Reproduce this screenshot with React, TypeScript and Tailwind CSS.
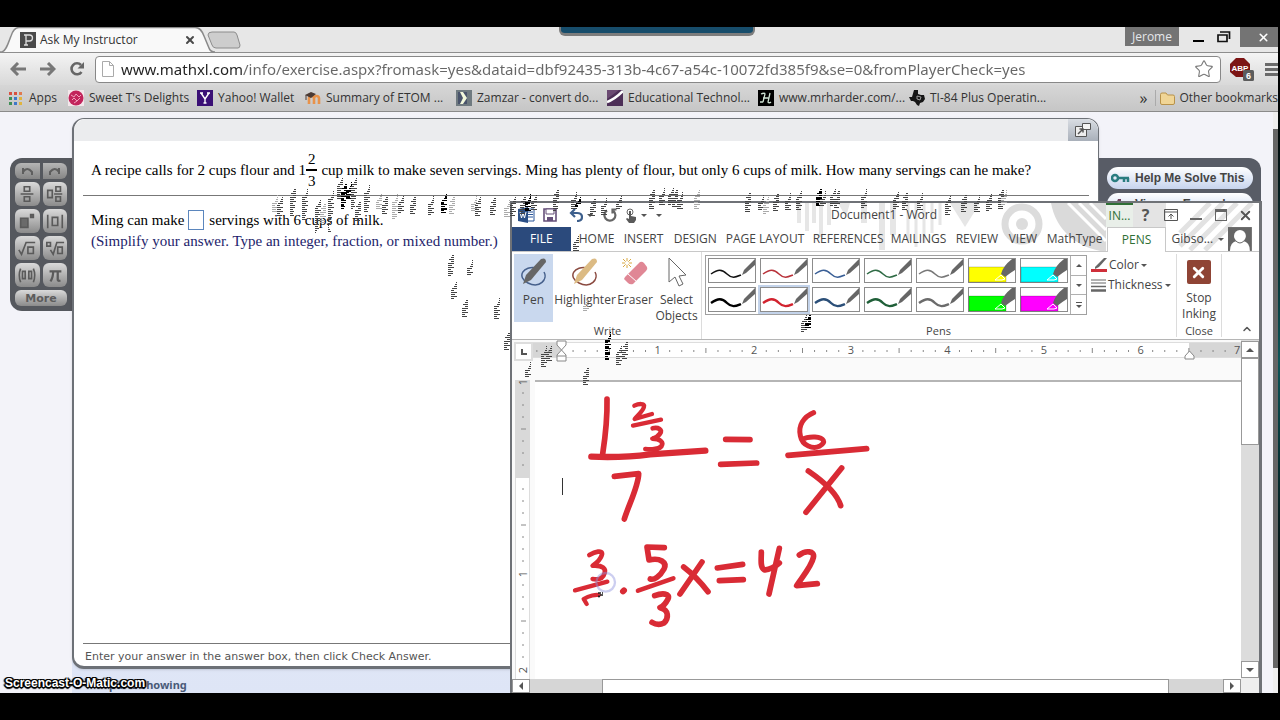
import type { ReactNode } from "react";
import { ChevronUp, Star, X } from "lucide-react";

const pageUrl =
  "www.mathxl.com/info/exercise.aspx?fromask=yes&dataid=dbf92435-313b-4c67-a54c-10072fd385f9&se=0&fromPlayerCheck=yes";

const bookmarks = [
  { label: "Apps", icon: "apps", width: "w-[60px]" },
  { label: "Sweet T's Delights", icon: "sweet", width: "w-[129px]" },
  { label: "Yahoo! Wallet", icon: "yahoo", width: "w-[108px]" },
  { label: "Summary of ETOM ...", icon: "moodle", width: "w-[151px]" },
  { label: "Zamzar - convert do...", icon: "zamzar", width: "w-[151px]" },
  { label: "Educational Technol...", icon: "edu", width: "w-[151px]" },
  { label: "www.mrharder.com/...", icon: "harder", width: "w-[151px]" },
  { label: "TI-84 Plus Operatin...", icon: "texas", width: "w-[151px]" },
];

const ribbonTabs = [
  { label: "HOME", width: "w-[45px]" },
  { label: "INSERT", width: "w-[50px]" },
  { label: "DESIGN", width: "w-[52px]" },
  { label: "PAGE LAYOUT", width: "w-[87px]" },
  { label: "REFERENCES", width: "w-[78px]" },
  { label: "MAILINGS", width: "w-[65px]" },
  { label: "REVIEW", width: "w-[53px]" },
  { label: "VIEW", width: "w-[38px]" },
  { label: "MathType", width: "w-[60px]" },
];

const pens = [
  { name: "Black pen", color: "#111", thick: 1.5 },
  { name: "Red pen", color: "#b8323a", thick: 1.5 },
  { name: "Blue pen", color: "#3a5f96", thick: 1.5 },
  { name: "Green pen", color: "#2f6b45", thick: 1.5 },
  { name: "Gray pen", color: "#777", thick: 1.5 },
  { name: "Yellow highlighter", color: "#ffff00", marker: true },
  { name: "Cyan highlighter", color: "#00ffff", marker: true },
  { name: "Thick black pen", color: "#000", thick: 2.4 },
  { name: "Thick red pen", color: "#d2232f", thick: 2.4, selected: true },
  { name: "Thick blue pen", color: "#2b4f78", thick: 2.4 },
  { name: "Thick green pen", color: "#1f5f38", thick: 2.4 },
  { name: "Thick gray pen", color: "#6b6b6b", thick: 2.4 },
  { name: "Green highlighter", color: "#00ff00", marker: true },
  { name: "Magenta highlighter", color: "#ff00ff", marker: true },
];

// x, y, height, weight (1 = faint, 2 = normal, 3 = dark)
const specks: number[][] = [
  [272, 195, 18, 1], [277, 197, 20, 2], [290, 189, 28, 2], [302, 189, 33, 2],
  [315, 200, 34, 2], [320, 204, 20, 1], [328, 191, 42, 2], [337, 178, 22, 2],
  [341, 184, 26, 3], [346, 182, 18, 3], [351, 178, 32, 2], [355, 202, 20, 2],
  [364, 185, 28, 2], [376, 194, 16, 1], [382, 197, 18, 2], [392, 194, 27, 1],
  [398, 196, 18, 2], [410, 197, 18, 2], [428, 196, 20, 2], [441, 194, 20, 3],
  [449, 197, 18, 1], [471, 196, 16, 1], [475, 197, 20, 2], [490, 198, 19, 2],
  [504, 200, 18, 1], [510, 197, 20, 2], [520, 197, 18, 2], [525, 194, 18, 3],
  [531, 195, 16, 2], [553, 190, 22, 2], [571, 192, 18, 2], [575, 197, 10, 3],
  [590, 199, 18, 2], [601, 198, 18, 2], [616, 196, 14, 2], [649, 190, 21, 2],
  [659, 188, 18, 2], [668, 188, 18, 2], [672, 190, 18, 2], [677, 192, 18, 2],
  [694, 190, 20, 1], [745, 193, 20, 2], [758, 195, 17, 2], [763, 197, 18, 1],
  [773, 194, 18, 2], [785, 193, 18, 2], [796, 191, 20, 2], [816, 189, 18, 3],
  [820, 191, 17, 2], [830, 189, 18, 2], [834, 191, 18, 2], [861, 189, 20, 2],
  [893, 192, 18, 2], [902, 193, 18, 2], [917, 193, 18, 2], [945, 196, 20, 2],
  [961, 195, 19, 2], [974, 195, 19, 2], [986, 194, 19, 2], [998, 190, 20, 2],
  [1001, 190, 16, 1], [573, 236, 17, 2], [448, 255, 22, 2], [467, 260, 16, 2],
  [451, 282, 18, 2], [462, 300, 18, 2], [494, 298, 22, 2], [583, 298, 14, 1],
  [504, 333, 18, 2], [605, 332, 28, 3], [616, 346, 20, 2], [622, 342, 18, 2],
  [541, 346, 22, 2], [546, 346, 16, 2], [583, 368, 19, 2], [525, 362, 17, 2],
  [801, 315, 19, 2], [805, 315, 14, 3],
];

const speckRows = [1, 1, 2, 3, 5, 3, 6, 4, 6, 3, 5, 5, 3, 4, 3, 4, 2];

function Specks() {
  return (
    <svg
      className="pointer-events-none absolute left-0 top-0 z-20"
      width="1278"
      height="581"
      viewBox="0 112 1278 581"
      shapeRendering="crispEdges"
      aria-hidden="true"
    >
      {specks.map(([x, y, h, weight], i) => (
        <g key={i} fill={weight === 1 ? "#aaa" : weight === 2 ? "#444" : "#000"}>
          {Array.from({ length: Math.floor(h / 2) }, (_, row) => {
            const w = speckRows[(row + (i % 3)) % speckRows.length];
            return (
              <rect
                key={row}
                x={row < 4 ? x + 6 - w : x}
                y={y + row * 2}
                width={w}
                height={weight === 3 && row % 3 === 1 ? 2 : 1}
              />
            );
          })}
        </g>
      ))}
    </svg>
  );
}

function BookmarkIcon({ name }: { name: string }) {
  const base = "h-4 w-4 shrink-0";
  switch (name) {
    case "apps":
      return (
        <svg className={base} viewBox="0 0 16 16">
          {["#d9503f", "#d9503f", "#e07a4f", "#3f8f55", "#3f78c8", "#e0b43f", "#3f8f55", "#3f78c8", "#e0b43f"].map(
            (c, i) => (
              <rect key={i} x={1 + (i % 3) * 5} y={2 + Math.floor(i / 3) * 5} width="3" height="3" fill={c} />
            ),
          )}
        </svg>
      );
    case "sweet":
      return (
        <svg className={base} viewBox="0 0 16 16">
          <rect width="16" height="16" fill="#f3e6ea" />
          <circle cx="8" cy="8" r="7.5" fill="#c2255c" />
          <path d="M3 5l3 2 2-3 3 3 2-2M4 10l2-2 3 3 3-3M6 13l3-2" stroke="#f2a0bd" fill="none" />
        </svg>
      );
    case "yahoo":
      return (
        <svg className={base} viewBox="0 0 16 16">
          <rect width="16" height="16" fill="#3b1076" />
          <path d="M4 3l4 6 4-6M8 9v4M3 3h3M10 3h3M6.500 13h3" stroke="#fff" strokeWidth="1.400" fill="none" />
        </svg>
      );
    case "moodle":
      return (
        <svg className={base} viewBox="0 0 16 16">
          <path d="M4 14V8.500a2.500 2.500 0 0 1 5 0V14M9 14V8.500a2.500 2.500 0 0 1 5 0V14" stroke="#e8924a" strokeWidth="2.600" fill="none" />
          <path d="M0 5l6-3 5 2-5 4z" fill="#4b3a34" />
          <path d="M1 5v5" stroke="#4b3a34" />
        </svg>
      );
    case "zamzar":
      return (
        <svg className={base} viewBox="0 0 16 16">
          <rect width="16" height="16" fill="#6f7a80" />
          <rect x="2" y="2" width="9" height="12" fill="#49536b" />
          <path d="M4 2h3l4 6-4 6H4l3-6z" fill="#f2f8dc" />
        </svg>
      );
    case "edu":
      return (
        <svg className={base} viewBox="0 0 16 16">
          <rect width="16" height="16" fill="#4d2f57" />
          <path d="M0 0h12L0 9z" fill="#6b4a72" />
          <path d="M0 12C6 10 11 6 16 1" stroke="#fff" strokeWidth="2.500" fill="none" />
        </svg>
      );
    case "harder":
      return (
        <svg className={base} viewBox="0 0 16 16">
          <rect width="16" height="16" fill="#000" />
          <path d="M3 4c2-1 4-1 4 0L5 12M12 3l-2 9c0 1 2 1 3 0M5 8h6M2 12h3" stroke="#cfe3d4" strokeWidth="1.300" fill="none" />
        </svg>
      );
    default:
      return (
        <svg className={base} viewBox="0 0 16 16">
          <path d="M5 0h4v4l3 1 3 0 1 4-2 3-3 1-1 3-2-1-2-3-2-1-2 0-2-4h3z" fill="#161616" />
          <path d="M8 6l4 1-1 3-3-1z" stroke="#b9b9b9" strokeWidth=".8" fill="none" />
        </svg>
      );
  }
}

function TabStrip() {
  return (
    <div className="relative flex h-[25px] items-center bg-[#e7e7e7] font-['Open_Sans',sans-serif]">
      <svg className="absolute left-0 top-0" width="250" height="26" viewBox="0 0 250 26" aria-hidden="true">
        <path d="M0 25 H2 C6 24 8 17 11 9 C13 3 15 .5 19 .5 H195 C200 .5 202 4 204 9 L209 21 C210 24 212 25 215 25" fill="#f9f9f9" stroke="#8a8a8a" strokeWidth="1.500" />
        <path d="M212 5 H234 Q236 5 237 8 L240 18 Q240 21 238 21 H216 Q213 21 212 18 L208 8 Q208 5 212 5Z" fill="#cdcdcd" stroke="#8c8c8c" />
      </svg>
      <button type="button" className="relative flex w-[180px] items-center pl-5 text-xs text-[#333]">
        <svg width="16" height="16" viewBox="0 0 16 16" aria-hidden="true">
          <rect width="16" height="16" fill="#4a4a4a" />
          <path d="M6 13V3h3.500a2.500 2.500 0 0 1 0 6H6M4 3h2M4 13h4" stroke="#ddd" strokeWidth="1.300" fill="none" />
        </svg>
        <span className="ml-1">Ask My Instructor</span>
      </button>
      <button type="button" aria-label="Close tab" className="relative ml-1">
        <X size={12} strokeWidth={4} color="#4a4a4a" />
      </button>
      <div className="flex flex-1 items-start justify-center self-start pr-[8px]">
        <div className="h-[9px] w-[196px] rounded-b-md border-x-2 border-b-[3px] border-[#7d7d7d] bg-[#174d6b]" />
      </div>
      <div className="flex self-start">
        <button type="button" className="h-[19px] w-[54px] bg-[#747474] text-xs leading-4 text-gray-200">
          Jerome
        </button>
        <button type="button" aria-label="Minimize" className="flex h-5 w-[38px] items-center justify-center pt-2">
          <span className="h-[2px] w-[11px] bg-black" />
        </button>
        <button type="button" aria-label="Restore" className="flex h-5 w-[23px] items-center">
          <svg width="14" height="12" viewBox="0 0 14 12">
            <path d="M3 1h9.500v7M1 4h9v6.500H1z" fill="none" stroke="#111" strokeWidth="1.700" />
          </svg>
        </button>
        <button type="button" aria-label="Close" className="flex h-[20px] w-[38px] items-center justify-center bg-[#747474] pl-2">
          <X size={13} strokeWidth={3} color="#fff" />
        </button>
      </div>
    </div>
  );
}

function Toolbar() {
  return (
    <div className="flex h-[33px] items-center border-t border-[#8e8e8e] bg-linear-to-b from-[#f4f4f4] to-[#d9d9d9] pl-[10px]">
      <button type="button" aria-label="Back" className="w-[29px]">
        <svg width="17" height="14" viewBox="0 0 17 14">
          <path d="M8 1L2 7l6 6M2 7h14" fill="none" stroke="#777" strokeWidth="3" />
        </svg>
      </button>
      <button type="button" aria-label="Forward" className="w-[30px]">
        <svg width="17" height="14" viewBox="0 0 17 14">
          <path d="M9 1l6 6-6 6M15 7H1" fill="none" stroke="#777" strokeWidth="3" />
        </svg>
      </button>
      <button type="button" aria-label="Reload" className="w-[26px]">
        <svg width="16" height="16" viewBox="0 0 16 16">
          <path d="M12.500 11A5.500 5.500 0 1 1 12 4" fill="none" stroke="#666" strokeWidth="2.600" />
          <path d="M15 1v6.500H8.500z" fill="#666" />
        </svg>
      </button>
      <div className="relative flex h-[27px] flex-1 items-center rounded-sm border border-[#888] bg-white px-[6px]">
        <svg width="12" height="16" viewBox="0 0 12 16" aria-hidden="true">
          <path d="M.5.5h7l4 4v11H.500zM7.500.5v4h4" fill="#fff" stroke="#aaa" />
        </svg>
        {/* the host part of the address is darker than the rest */}
        <input
          type="text"
          aria-label="Address"
          defaultValue={pageUrl}
          className="ml-[7px] min-w-0 flex-1 bg-[linear-gradient(to_right,#222_121px,#666_121px)] bg-clip-text font-['Noto_Sans',sans-serif] text-[15px] text-transparent outline-none"
        />
        <button type="button" aria-label="Bookmark this page">
          <Star size={20} strokeWidth={1.3} color="#777" />
        </button>
      </div>
      <button type="button" aria-label="Adblock Plus" className="relative ml-[9px] h-6 w-[25px]">
        <svg width="25" height="25" viewBox="0 0 25 25">
          <path d="M6 1h8l6 6v8l-6 5H6l-6-5V7z" fill="#7c1414" />
          <text x="1.500" y="14" fontSize="8" fontWeight="700" fill="#fff" fontFamily="Liberation Sans">ABP</text>
          <rect x="13" y="13" width="11" height="11" rx="1.500" fill="#5c5c5c" />
          <text x="16" y="22" fontSize="9" fontWeight="700" fill="#fff" fontFamily="Liberation Sans">6</text>
        </svg>
      </button>
      <button type="button" aria-label="Menu" className="ml-[10px] flex w-[13px] flex-col gap-[2px]">
        <span className="h-[3px] bg-[#6a6a6a]" />
        <span className="h-[3px] bg-[#6a6a6a]" />
        <span className="h-[3px] bg-[#6a6a6a]" />
      </button>
    </div>
  );
}

function BookmarksBar() {
  return (
    <nav className="flex h-[27px] items-center border-b border-[#8a8a8a] bg-linear-to-b from-[#d6d6d6] to-[#c6c6c6] pl-2 font-['Open_Sans',sans-serif] text-xs text-[#333]">
      {bookmarks.map((b) => (
        <a key={b.label} href="#" className={`flex shrink-0 items-center gap-[5px] whitespace-nowrap ${b.width}`}>
          <BookmarkIcon name={b.icon} />
          {b.label}
        </a>
      ))}
      <button type="button" className="ml-auto mr-[8px] text-base leading-none">»</button>
      <a href="#" className="flex items-center gap-1 whitespace-nowrap border-l border-[#aaa] pl-1">
        <svg width="15" height="13" viewBox="0 0 15 13" className="shrink-0" aria-hidden="true">
          <path d="M.5 2.500Q.5 1 2 1h4l1.500 2H13q1.500 0 1.500 1.500v6.500q0 1.500-1.500 1.500H2Q.5 12.500.5 11z" fill="#f0d596" stroke="#b8924a" />
        </svg>
        Other bookmarks
      </a>
    </nav>
  );
}

const paletteIcons: { name: string; art: ReactNode }[] = [
  { name: "Fraction", art: <path d="M9 3h6v5H9zM5 11h14M9 14h6v5H9z" /> },
  { name: "Mixed number", art: <path d="M4 7h5v8H4zM13 3h5v5h-5zM11 11h9M13 14h5v5h-5z" /> },
  { name: "Exponent", art: <path d="M5 8h8v10H5zM16 4h3v3h-3z" fill="#6a6a6a" /> },
  { name: "Absolute value", art: <path d="M4 4v15M20 4v15M9 7h6v9H9z" /> },
  { name: "Square root", art: <path d="M3 13l3 5 5-13h10M13 10h6v7h-6z" /> },
  { name: "Root", art: <path d="M7 13l3 5 4-13h8M15 10h5v7h-5zM3 5h4v4H3z" /> },
  { name: "Ordered pair", art: <path d="M5 4q-3 7 0 15M19 4q3 7 0 15M7 7h3v8H7zM14 7h3v8h-3z" /> },
  { name: "Pi", art: <path d="M6 7h13M10 7q0 7-3 11M15 7v9q0 2 3 1" strokeWidth="2.500" /> },
];

function Palette() {
  const key = "rounded-md bg-linear-to-b from-[#dadada] to-[#8b8b8b]";
  return (
    <aside className="ml-[10px] mt-[46px] w-[62px] shrink-0 self-start rounded-l-xl bg-[#55585e] p-[5px]">
      <div className="grid grid-cols-2 gap-x-[3px] gap-y-[3px]">
        <button type="button" aria-label="Undo" className="flex h-4 items-center justify-center rounded-l-md bg-linear-to-b from-[#b5b5b5] to-[#858585]">
          <svg width="14" height="12" viewBox="0 0 14 12"><path d="M3 9V3M3 7q4-6 9 0v3" fill="none" stroke="#5e5e5e" strokeWidth="2" /></svg>
        </button>
        <button type="button" aria-label="Redo" className="flex h-4 items-center justify-center rounded-r-md bg-linear-to-b from-[#b5b5b5] to-[#858585]">
          <svg width="14" height="12" viewBox="0 0 14 12"><path d="M11 9V3M11 7Q7 1 2 7v3" fill="none" stroke="#5e5e5e" strokeWidth="2" /></svg>
        </button>
        {paletteIcons.map((p) => (
          <button key={p.name} type="button" aria-label={p.name} className={`flex h-6 items-center justify-center ${key}`}>
            <svg width="22" height="20" viewBox="0 0 24 22" fill="none" stroke="#5a5a5a" strokeWidth="1.800">
              {p.art}
            </svg>
          </button>
        ))}
      </div>
      <button type="button" className={`mt-[3px] block h-4 w-full font-['DejaVu_Sans',sans-serif] text-[11px] font-bold leading-none text-[#5c5c5c] ${key}`}>
        More
      </button>
    </aside>
  );
}

function Exercise() {
  return (
    <section className="flex flex-1 flex-col bg-linear-to-b from-[#f3f3f9] to-[#dee5f6]">
      <div className="mt-[6px] flex flex-1 flex-col rounded-xl border border-b-[3px] border-l-2 border-[#6d7177] bg-white shadow-sm">
        <div className="flex h-[22px] justify-end overflow-hidden rounded-t-xl bg-[#ebecee]">
          <button type="button" aria-label="Open in new window" className="flex w-[30px] items-center justify-center bg-linear-to-b from-[#d9dde3] to-[#a9b0ba]">
            <svg width="18" height="16" viewBox="0 0 18 16" fill="none" stroke="#555">
              <path d="M1.500 4.500h11v10h-11z" fill="#eee" />
              <path d="M8.500 1.500h8v6h-8z" fill="#f4f4f4" />
              <path d="M4 12l5-5M5.500 7H9v3.500" strokeWidth="1.500" />
            </svg>
          </button>
        </div>
        <div className="ml-[9px] mr-[9px] flex flex-1 flex-col font-['Liberation_Serif',serif] text-[15px] text-black">
          <p className="flex h-[55px] items-center whitespace-nowrap border-b border-[#777] pl-[8px] pt-1">
            A recipe calls for 2 cups flour and 1
            <span className="mr-1 inline-flex flex-col items-center leading-[20px]">
              <span className="border-b-2 border-black px-[2px]">2</span>
              <span>3</span>
            </span>
            cup milk to make seven servings. Ming has plenty of flour, but only 6 cups of milk. How many servings can he make?
          </p>
          <p className="mt-[14px] flex h-5 items-center pl-[8px]">
            <label htmlFor="answer">Ming can make</label>
            <input id="answer" type="text" className="ml-1 mr-[5px] h-5 w-4 border border-[#5b86bd] bg-white outline-none" />
            servings with 6 cups of milk.
          </p>
          <p className="pl-[8px] text-[#1d1d6b]">(Simplify your answer. Type an integer, fraction, or mixed number.)</p>
          <p className="mt-auto h-[23px] border-t border-[#777] pl-[2px] pt-[5px] font-['DejaVu_Sans',sans-serif] text-[11px] text-[#555]">
            Enter your answer in the answer box, then click Check Answer.
          </p>
        </div>
      </div>
      <div className="h-6 pl-[37px] pt-2 font-['Noto_Sans',sans-serif] text-[11px] font-bold leading-4 text-[#4a5a78]">
        parts showing
      </div>
    </section>
  );
}

function HelpPanel() {
  const pill =
    "flex h-[22px] w-full items-center gap-[5px] whitespace-nowrap rounded-full bg-linear-to-b from-white to-[#c7d4ee] pl-1 text-xs font-bold text-[#444]";
  return (
    <aside className="mr-[12px] mt-[46px] h-[135px] w-[162px] shrink-0 rounded-tr-xl bg-[#585c66] px-2 pt-[9px] font-['Liberation_Sans',sans-serif]">
      <button type="button" className={pill}>
        <svg width="19" height="12" viewBox="0 0 19 12" className="shrink-0" fill="none" stroke="#2a7d80" aria-hidden="true">
          <circle cx="4" cy="6" r="3" strokeWidth="2.500" />
          <path d="M7 6h11M13 6v4M17 6v4" strokeWidth="2.500" />
        </svg>
        Help Me Solve This
      </button>
      <button type="button" className={`mt-1 ${pill}`}>
        <svg width="19" height="12" viewBox="0 0 19 12" className="shrink-0" aria-hidden="true">
          <path d="M7 1h3v3h4v7H5V6z" fill="#6d3f5a" />
        </svg>
        View an Example
      </button>
    </aside>
  );
}

function WordTitleArt() {
  return (
    <svg className="absolute right-0 top-0" width="470" height="49" viewBox="789 202 470 49" aria-hidden="true">
      <g stroke="#e6e6e6" strokeWidth="4">
        <path d="M799 202v20M807 202v28M814 202v20M821 202v34M829 202v22" />
        <path d="M864 202v20M882 202v47M893 202v32" strokeWidth="6" />
        <path d="M908 202v38M916 202v44M924 202v40M932 202v30M940 202v22" strokeWidth="3" />
      </g>
      <path d="M838 202h12l-4 14zM950 202h30l-15 24z" fill="#e6e6e6" />
      <circle cx="1022" cy="223" r="17" fill="none" stroke="#dcdcdc" strokeWidth="7" />
      <circle cx="1022" cy="223" r="6" fill="#dcdcdc" />
      <path d="M1051 202h55v49c-30-4-50-22-55-49z" fill="#dadada" />
      <path d="M1068 202l38 38M1079 202l27 27M1090 202l16 16" stroke="#fff" strokeWidth="3" />
      <path d="M1133 202h33v24h-33z" fill="#e4e4e4" />
      <path d="M1180 232l30-30M1180 245l43-43M1190 249l47-47M1205 249l47-47" stroke="#e2e2e2" strokeWidth="5" />
    </svg>
  );
}

function WordTitleBar() {
  return (
    <div className="relative flex h-6 items-center pl-[6px]">
      <svg width="17" height="16" viewBox="0 0 17 16" aria-hidden="true">
        <path d="M8 2h8v12H8z" fill="#fff" stroke="#2b579a" />
        <path d="M10 5h5M10 7.500h5M10 10h5" stroke="#2b579a" />
        <path d="M0 2l10-2v16L0 14z" fill="#2b4f86" />
        <path d="M2 5l1.500 6L5 6l1.500 5L8 5" fill="none" stroke="#fff" />
      </svg>
      <button type="button" aria-label="Save" className="ml-2">
        <svg width="14" height="14" viewBox="0 0 14 14">
          <path d="M1 1h12v12H1z" fill="#fff" stroke="#66507a" strokeWidth="1.600" />
          <path d="M3 1h8v5H3z" fill="#fff" stroke="#66507a" />
          <path d="M4 9h6v4H4z" fill="#66507a" />
        </svg>
      </button>
      <button type="button" aria-label="Undo" className="ml-3">
        <svg width="14" height="14" viewBox="0 0 14 14" fill="none" stroke="#3d5f8c" strokeWidth="2.200">
          <path d="M2 5h6q5 0 5 4t-5 4M6 1L2 5l4 4" />
        </svg>
      </button>
      <span className="ml-1 h-0 w-0 border-x-[3px] border-t-[3px] border-x-transparent border-t-[#555]" />
      <button type="button" aria-label="Redo" className="ml-[10px]">
        <svg width="14" height="14" viewBox="0 0 14 14" fill="none" stroke="#666" strokeWidth="2.200">
          <path d="M4 2.500A5.500 5.500 0 1 0 10.500 3M13.500 1.500h-4v4" />
        </svg>
      </button>
      <button type="button" aria-label="Touch mode" className="ml-2">
        <svg width="12" height="15" viewBox="0 0 12 15">
          <circle cx="5" cy="4" r="3" fill="none" stroke="#666" />
          <path d="M4 3h2v5l5 1v3l-2 3H4l-3-4 1-1 2 1z" fill="#5a5a5a" />
        </svg>
      </button>
      <span className="ml-[4px] h-0 w-0 border-x-[3px] border-t-[3px] border-x-transparent border-t-[#555]" />
      <span className="ml-[9px] h-0 w-0 border-x-[3px] border-t-[3px] border-x-transparent border-t-[#555]" />
      <h1 className="flex-1 text-center text-xs text-[#444]">Document1 - Word</h1>
      <div className="h-6 w-[27px] border-t-2 border-[#2f6f35] bg-[#e9efe9] text-center text-xs leading-[22px] text-[#2f6f35]">IN...</div>
      <div className="flex w-[126px] items-center text-[#555]">
        <button type="button" aria-label="Help" className="w-[25px] text-base font-bold">?</button>
        <button type="button" aria-label="Ribbon display options" className="flex w-[25px] justify-center">
          <svg width="14" height="12" viewBox="0 0 14 12" fill="none" stroke="#555">
            <path d="M.5.5h13v11H.5zM.5 3h13M7 10V5M4.500 7.500L7 5l2.500 2.500" />
          </svg>
        </button>
        <button type="button" aria-label="Minimize" className="flex w-[25px] justify-center pt-2">
          <span className="h-[2px] w-[12px] bg-[#666]" />
        </button>
        <button type="button" aria-label="Maximize" className="flex w-[25px] justify-center">
          <span className="h-[12px] w-[12px] border border-t-[3px] border-[#666]" />
        </button>
        <button type="button" aria-label="Close" className="flex w-[25px] justify-center">
          <X size={15} strokeWidth={3} color="#555" />
        </button>
      </div>
    </div>
  );
}

function RibbonTabs() {
  return (
    <div className="relative flex h-[25px] border-b border-[#c8c8c8] text-xs text-[#444]">
      <button type="button" className="w-[59px] bg-[#2b4a7c] text-white">FILE</button>
      <div className="flex flex-1 pl-2">
        {ribbonTabs.map((t) => (
          <button key={t.label} type="button" className={`whitespace-nowrap text-left ${t.width}`}>
            {t.label}
          </button>
        ))}
      </div>
      <button type="button" className="-mb-px w-[60px] border-x border-t border-[#c8c8c8] bg-white text-[#2f6f35]">PENS</button>
      <button type="button" className="flex w-[62px] items-center justify-end gap-[5px] pr-1">
        Gibso...
        <span className="h-0 w-0 border-x-[3px] border-t-[3px] border-x-transparent border-t-[#555]" />
      </button>
      <svg width="24" height="24" viewBox="0 0 24 24" className="mr-[7px]" aria-hidden="true">
        <rect width="24" height="24" fill="#666" />
        <circle cx="12" cy="9" r="6" fill="#fff" />
        <path d="M2 24q0-9 7-10h6q7 1 7 10z" fill="#fff" />
        <path d="M8 14q4 4 8 0" stroke="#666" fill="none" />
      </svg>
    </div>
  );
}

function PenSwatch({ pen }: { pen: (typeof pens)[number] }) {
  return (
    <button type="button" aria-label={pen.name} className={pen.selected ? "bg-[#c3d3ea] p-[2px]" : "p-[2px]"}>
      <svg width="48" height="25" viewBox="0 0 48 25" className="block">
        <rect x=".5" y=".5" width="47" height="24" fill="#fff" stroke="#8c8c8c" />
        {pen.marker ? (
          <>
            <rect x="1" y="9" width="37" height="15" fill={pen.color} stroke="#0003" />
            <path d="M27 22l6-5 4 4-3 1z" fill={pen.color} stroke="#fff" />
            <path d="M33 16q2-8 11-15h3v11q-5 3-10 7z" fill="#666" />
          </>
        ) : (
          <>
            <path d="M3 16C10 11 14 11 19 16S28 19 33 17" fill="none" stroke={pen.color} strokeWidth={pen.thick} />
            <path d="M34 17l2-5L47 1v6l-9 8z" fill="#666" />
          </>
        )}
      </svg>
    </button>
  );
}

function Ribbon() {
  const caret = "h-0 w-0 border-x-[3px] border-t-[3px] border-x-transparent border-t-[#555]";
  const tool = "flex h-[68px] flex-col items-center pt-[3px] leading-4";
  return (
    <div className="flex h-[88px] border-b border-[#b5b5b5] bg-white text-xs text-[#444]">
      <div className="flex w-[190px] shrink-0 flex-col border-r border-[#dcdcdc] pl-[2px] pt-[2px]">
        <div className="flex">
          <button type="button" className={`${tool} w-[39px] bg-[#c9d8ee]`}>
            <svg width="30" height="31" viewBox="0 0 30 31" className="mb-1" fill="none">
              <path d="M18 11C4 8-3 20 9 26s20-4 16-11" stroke="#46608c" strokeWidth="1.500" />
              <path d="M4 27l3-9L22 2q5-2 5 3L12 23z" fill="#666" />
            </svg>
            Pen
          </button>
          <button type="button" className={`${tool} w-[64px]`}>
            <svg width="30" height="31" viewBox="0 0 30 31" className="mb-1" fill="none">
              <path d="M18 11C4 8-3 20 9 26s20-4 16-11" stroke="#8a4a40" strokeWidth="1.500" />
              <path d="M4 27l3-9L22 2q5-2 5 3L12 23z" fill="#dcbb84" />
            </svg>
            Highlighter
          </button>
          <button type="button" className={`${tool} w-[36px]`}>
            <svg width="30" height="31" viewBox="0 0 30 31" className="mb-1">
              <path d="M7 1v10M2 6h10M3 2l8 8M11 2l-8 8" stroke="#d8a843" />
              <circle cx="7" cy="6" r="2" fill="#fff" />
              <path d="M5 20L20 5q2-1 4 1l3 4q1 2-1 4L13 27q-3 1-5-1l-4-4z" fill="#e08795" />
              <path d="M8 17l9 8" stroke="#fff" />
            </svg>
            Eraser
          </button>
          <button type="button" className={`${tool} w-[47px]`}>
            <svg width="20" height="31" viewBox="0 0 20 31" className="mb-1 shrink-0">
              <path d="M2 1v24l6-5 4 9 4-2-4-8 7-1z" fill="#fff" stroke="#666" />
            </svg>
            Select Objects
          </button>
        </div>
        <div className="mt-px text-center text-[11px] leading-4">Write</div>
      </div>
      <div className="flex flex-1 flex-col pl-[3px] pt-[3px]">
        <div className="flex">
          <div className="flex border border-[#a0a0a0] bg-white">
            <div className="grid grid-cols-7">
              {pens.map((p) => (
                <PenSwatch key={p.name} pen={p} />
              ))}
            </div>
            <div className="flex w-4 flex-col divide-y divide-[#b0b0b0] border-l border-[#b0b0b0]">
              <button type="button" aria-label="Previous pens" className="flex flex-1 items-center justify-center">
                <span className="h-0 w-0 border-x-[3px] border-b-[3px] border-x-transparent border-b-[#555]" />
              </button>
              <button type="button" aria-label="Next pens" className="flex flex-1 items-center justify-center">
                <span className={caret} />
              </button>
              <button type="button" aria-label="All pens" className="flex flex-1 flex-col items-center justify-center gap-[2px]">
                <span className="h-px w-[6px] bg-[#555]" />
                <span className={caret} />
              </button>
            </div>
          </div>
          <div className="ml-1 flex flex-col items-start">
            <button type="button" className="flex h-[20px] items-center gap-[2px]">
              <svg width="16" height="15" viewBox="0 0 16 15" aria-hidden="true">
                <path d="M4 9L13 0h3L8 9l-4 2z" fill="#666" />
                <path d="M0 11h16v3H0z" fill="#cf2f3a" />
              </svg>
              Color
              <span className={caret} />
            </button>
            <button type="button" className="flex h-[20px] items-center gap-[2px]">
              <svg width="15" height="13" viewBox="0 0 15 13" stroke="#666" aria-hidden="true">
                <path d="M0 1h15M0 4h15" />
                <path d="M0 7.500h15" strokeWidth="1.500" />
                <path d="M0 11.500h15" strokeWidth="2.500" />
              </svg>
              Thickness
              <span className={caret} />
            </button>
          </div>
        </div>
        <div className="mt-2 pr-1 text-center text-[11px] leading-4">Pens</div>
      </div>
      <div className="my-[2px] flex w-[46px] shrink-0 flex-col items-center border-x border-[#dcdcdc] pt-[6px] leading-4">
        <button type="button" className="flex flex-col items-center">
          <span className="mb-[6px] flex h-6 w-6 items-center justify-center rounded-[2px] bg-[#8f4435]">
            <X size={17} strokeWidth={4} color="#fff" />
          </span>
          Stop
          <span>Inking</span>
        </button>
        <div className="mt-px text-[11px] leading-4">Close</div>
      </div>
      <div className="flex w-[37px] shrink-0 items-end justify-center pb-1 pl-3">
        <button type="button" aria-label="Collapse the ribbon">
          <ChevronUp size={12} strokeWidth={3} color="#555" />
        </button>
      </div>
    </div>
  );
}

const INCH = 96.6;

function HorizontalRuler() {
  return (
    <svg className="h-[22px] w-full" aria-hidden="true">
      <rect x="0" y="3" width="28" height="14" fill="#d6d6d6" />
      <rect x="28" y="3" width="628" height="14" fill="#fff" />
      <rect x="656" y="3" width="400" height="14" fill="#d6d6d6" />
      <path d="M0 2.500h1000M0 17.500h1000" stroke="#ddd" />
      {Array.from({ length: 59 }, (_, i) => i - 2).map((i) =>
        i % 8 === 0 ? (
          i > 0 && (
            <text key={i} x={28 + (i / 8) * INCH} y="14" fontSize="11" textAnchor="middle" fill="#555">
              {i / 8}
            </text>
          )
        ) : (
          <path
            key={i}
            d={i % 4 === 0 ? `M${28 + (i / 8) * INCH} 8v5` : `M${28 + (i / 8) * INCH} 10v2`}
            stroke="#888"
          />
        ),
      )}
      <path d="M24 1h9v4l-4.500 5 4.500 5v6h-9v-6l4.500-5-4.500-5zM24 16h9" fill="#fff" stroke="#888" />
      <path d="M652 19v-3l4.500-5 4.500 5v3z" fill="#fff" stroke="#888" />
    </svg>
  );
}

function VerticalRuler() {
  return (
    <svg className="h-full w-[18px] shrink-0" aria-hidden="true">
      <rect x="3" y="0" width="15" height="98" fill="#d9d9d9" />
      <rect x="3" y="98" width="15" height="400" fill="#fff" />
      <path d="M3.500 98v400M17.500 98v400" stroke="#ddd" />
      {Array.from({ length: 25 }, (_, i) => i).map((i) =>
        i % 8 === 0 ? (
          i !== 8 && (
            <text key={i} x="0" y="0" fontSize="11" textAnchor="middle" fill="#555" transform={`translate(15 ${i * 12 + 2}) rotate(-90)`}>
              {i === 24 ? 2 : 1}
            </text>
          )
        ) : (
          <path key={i} d={i % 4 === 0 ? `M9 ${i * 12 + 1}h5` : `M10 ${i * 12 + 1}h2`} stroke="#888" />
        ),
      )}
    </svg>
  );
}

function Ink() {
  return (
    <svg className="absolute left-[15px] top-[7px]" width="340" height="260" viewBox="0 0 1020 780" role="img" aria-label="Handwritten proportion">
      <g fill="none" stroke="#d92b35" strokeWidth="17" strokeLinecap="round" strokeLinejoin="round">
        <path d="M171 30C172 80 168 130 158 195" />
        <path d="M124 203C200 206 270 200 300 196L466 185" strokeWidth="19" />
        <path d="M253 50C265 44 286 42 282 53C280 66 262 80 254 90L306 75" strokeWidth="13" />
        <path d="M249 110L333 92" strokeWidth="13" />
        <path d="M308 118C325 114 338 122 330 134C322 146 307 149 307 149C332 150 342 160 334 172C325 182 300 182 286 180" strokeWidth="14" />
        <path d="M193 262L266 254C266 290 235 350 223 390" />
        <path d="M527 151L600 152M512 226L620 222" />
        <path d="M791 71C760 84 744 110 751 140C757 172 790 180 808 172C830 160 822 146 795 144C775 143 762 148 755 152" strokeWidth="15" />
        <path d="M714 199L950 179" />
        <path d="M775 246C810 270 860 310 872 350M875 237L768 370" />
        <path d="M118 498C135 488 158 482 156 496C152 515 128 530 128 530C160 528 168 540 164 552C158 574 140 572 128 570" strokeWidth="14" />
        <path d="M75 604L172 578" strokeWidth="13" />
        <path d="M110 645L101 630C118 620 138 616 146 618" strokeWidth="13" />
        <path d="M219 607L222 604" strokeWidth="18" />
        <path d="M343 476L291 474L297 513C330 505 352 520 342 540C330 562 312 574 301 570" />
        <path d="M264 605L370 568" strokeWidth="14" />
        <path d="M314 620C335 612 362 612 354 630C344 650 330 656 330 656C358 662 356 688 342 702C330 708 316 706 306 700" />
        <path d="M401 534C430 556 460 590 474 608M456 519L390 615" />
        <path d="M502 537L578 526M508 575L580 572" />
        <path d="M634 489C634 510 630 535 642 542C655 545 680 530 688 522M688 478L657 615" />
        <path d="M748 498C765 484 796 484 790 506C784 534 752 570 740 590L802 584" />
      </g>
      <circle cx="167" cy="580" r="28" fill="none" stroke="#8d93dd" strokeOpacity=".45" strokeWidth="7" />
      <path d="M144 612h9M150 618h9M144 622h6M156 612h3" stroke="#222" strokeWidth="5" />
    </svg>
  );
}

function DocumentArea() {
  const arrow = "flex shrink-0 items-center justify-center border border-[#999] bg-white";
  return (
    <div className="flex min-h-0 flex-1">
      <div className="flex min-w-0 flex-1 flex-col bg-[#fafafa]">
        <div className="flex h-[22px] shrink-0">
          <button type="button" aria-label="Tab stop" className="ml-[2px] mt-[2px] flex h-[19px] w-[19px] shrink-0 items-center justify-center border-2 border-[#ddd] bg-white">
            <span className="h-[6px] w-[6px] border-b-2 border-l-2 border-[#555]" />
          </button>
          <HorizontalRuler />
        </div>
        <div className="mt-[18px] flex min-h-0 flex-1">
          <VerticalRuler />
          <div className="relative ml-[5px] flex-1 border-t-2 border-[#b5b5b5] bg-white pl-[27px] pt-[96px]">
            <div className="h-[17px] w-px bg-[#333]" />
            <Ink />
          </div>
        </div>
        <div className="flex h-[14px] shrink-0 overflow-hidden bg-[#d6d6d6]">
          <button type="button" aria-label="Scroll left" className={`${arrow} w-[18px]`}>
            <span className="h-0 w-0 border-y-4 border-r-4 border-y-transparent border-r-[#555]" />
          </button>
          <div className="ml-[72px] mr-[54px] flex-1 border border-b-0 border-[#999] bg-white" />
          <button type="button" aria-label="Scroll right" className={`${arrow} w-[18px]`}>
            <span className="h-0 w-0 border-y-4 border-l-4 border-y-transparent border-l-[#555]" />
          </button>
        </div>
      </div>
      <div className="flex w-[18px] shrink-0 flex-col bg-[#dcdcdc]">
        <button type="button" aria-label="Scroll up" className={`${arrow} mt-px h-[17px]`}>
          <span className="h-0 w-0 border-x-4 border-b-4 border-x-transparent border-b-[#555]" />
        </button>
        <div className="h-[87px] border border-[#999] bg-white" />
        <button type="button" aria-label="Scroll down" className={`${arrow} mt-auto h-[17px]`}>
          <span className="h-0 w-0 border-x-4 border-t-4 border-x-transparent border-t-[#555]" />
        </button>
        <div className="h-[15px] bg-[#eee]" />
      </div>
    </div>
  );
}

function WordWindow() {
  return (
    <div className="absolute bottom-0 left-[510px] right-[16px] top-[89px] z-10 flex flex-col border-l-2 border-r-[3px] border-t-2 border-[#6f7277] bg-white font-['Open_Sans',sans-serif]">
      <WordTitleArt />
      <WordTitleBar />
      <RibbonTabs />
      <Ribbon />
      <DocumentArea />
    </div>
  );
}

export default function App() {
  return (
    <div className="flex h-screen flex-col overflow-hidden bg-black py-[27px]">
      <div className="relative flex min-h-0 flex-1">
        <div className="flex min-w-0 flex-1 flex-col">
          <TabStrip />
          <Toolbar />
          <BookmarksBar />
          <main className="relative flex min-h-0 flex-1 bg-[#f3f3f9]">
            <Palette />
            <Exercise />
            <HelpPanel />
            <div className="flex w-[5px] shrink-0 flex-col bg-[#eee] pb-[25px] pt-[17px]">
              <div className="flex-1 bg-[#666]" />
            </div>
            <WordWindow />
            <Specks />
          </main>
        </div>
        <div className="w-[2px] shrink-0 bg-linear-to-b from-black via-[#0c5558] to-black" />
        <div className="absolute bottom-[1px] left-[5px] z-30 font-['Liberation_Sans',sans-serif] text-xs font-bold leading-[18px] text-white [text-shadow:-1px_-1px_0_#000,1px_-1px_0_#000,-1px_1px_0_#000,1px_1px_0_#000,0_2px_1px_#000,2px_0_1px_#000,-2px_0_1px_#000]">
          Screencast-O-Matic.com
        </div>
      </div>
    </div>
  );
}
